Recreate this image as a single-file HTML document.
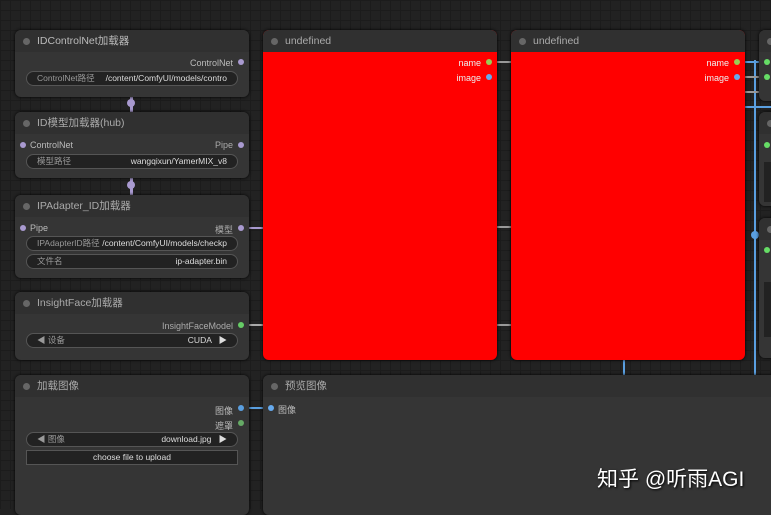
<!DOCTYPE html>
<html><head><meta charset="utf-8"><style>
*{margin:0;padding:0;box-sizing:border-box}
body{width:771px;height:509px;overflow:hidden;background:#222;position:relative;font-family:"Liberation Sans","Noto Sans CJK SC",sans-serif;font-size:9px;color:#aaa}
.grid{position:absolute;inset:0;background-image:linear-gradient(#1c1c1c 1px,transparent 1px),linear-gradient(90deg,#1c1c1c 1px,transparent 1px);background-size:10px 10px}
.n{position:absolute;background:#353535;border-radius:6px;box-shadow:0 0 3px #000}
.t{height:22px;background:#303030;border-radius:6px 6px 0 0;color:#aaa;font-size:10.5px;line-height:22px;padding-left:22px;position:relative}
.t:before{content:"";position:absolute;left:8px;top:8px;width:7px;height:7px;border-radius:50%;background:#666}
.a{position:absolute}
.dot{position:absolute;width:6px;height:6px;border-radius:50%}
.w{position:absolute;left:11px;right:11px;height:15px;border:1px solid #555;border-radius:8px;background:#222;line-height:13px;padding:0 10px;color:#999;font-size:8.5px}
.w b{position:absolute;right:10px;top:0;color:#ddd;font-weight:normal}
.r{text-align:right;right:16px}
.ln{position:absolute;background:#999}
</style></head><body><div class="grid"></div>

<div class="ln" style="left:249px;top:227px;width:14px;height:2px;background:#a99ad0"></div>
<div class="ln" style="left:249px;top:324px;width:14px;height:2px;background:#aaa"></div>
<div class="ln" style="left:497px;top:61px;width:14px;height:2px"></div>
<div class="ln" style="left:497px;top:226px;width:14px;height:2px"></div>
<div class="ln" style="left:497px;top:324px;width:14px;height:2px"></div>
<div class="ln" style="left:130px;top:97px;width:3px;height:15px;background:#a99ad0"></div>
<div class="ln" style="left:130px;top:178px;width:3px;height:17px;background:#a99ad0"></div>
<div class="dot" style="left:127px;top:99px;width:8px;height:8px;background:#a99ad0"></div>
<div class="dot" style="left:127px;top:181px;width:8px;height:8px;background:#a99ad0"></div>
<div class="ln" style="left:754px;top:60px;width:2px;height:320px;background:#5a9fe0"></div>
<div class="ln" style="left:623px;top:360px;width:2px;height:15px;background:#5a9fe0"></div>
<div class="ln" style="left:745px;top:61px;width:26px;height:2px;background:#5a9fe0"></div>
<div class="ln" style="left:745px;top:76px;width:14px;height:2px"></div>
<div class="ln" style="left:745px;top:91px;width:14px;height:2px"></div>
<div class="ln" style="left:745px;top:106px;width:26px;height:2px;background:#5a9fe0"></div>
<div class="dot" style="left:751px;top:231px;width:8px;height:8px;background:#5a9fe0"></div>
<div class="ln" style="left:249px;top:407px;width:20px;height:2px;background:#5a9fe0"></div>

<div class="n" style="left:15px;top:30px;width:234px;height:67px"><div class="t" style="color:#bbb">IDControlNet加载器</div>
<div class="a r" style="top:28px;color:#bbb">ControlNet</div><div class="dot" style="left:223px;top:29px;background:#a99ad0"></div>
<div class="w" style="top:41px">ControlNet路径<b>/content/ComfyUI/models/contro</b></div></div>

<div class="n" style="left:15px;top:112px;width:234px;height:66px"><div class="t">ID模型加载器(hub)</div>
<div class="dot" style="left:5px;top:30px;background:#a99ad0"></div><div class="a" style="left:15px;top:28px;color:#bbb">ControlNet</div>
<div class="a r" style="top:28px">Pipe</div><div class="dot" style="left:223px;top:30px;background:#a99ad0"></div>
<div class="w" style="top:42px">模型路径<b>wangqixun/YamerMIX_v8</b></div></div>

<div class="n" style="left:15px;top:195px;width:234px;height:83px"><div class="t">IPAdapter_ID加载器</div>
<div class="dot" style="left:5px;top:30px;background:#a99ad0"></div><div class="a" style="left:15px;top:28px;color:#bbb">Pipe</div>
<div class="a r" style="top:28px">模型</div><div class="dot" style="left:223px;top:30px;background:#a99ad0"></div>
<div class="w" style="top:41px">IPAdapterID路径<b>/content/ComfyUI/models/checkp</b></div>
<div class="w" style="top:59px">文件名<b>ip-adapter.bin</b></div></div>

<div class="n" style="left:15px;top:292px;width:234px;height:68px"><div class="t">InsightFace加载器</div>
<div class="a r" style="top:29px">InsightFaceModel</div><div class="dot" style="left:223px;top:30px;background:#6c6"></div>
<div class="w" style="top:41px">◀ 设备<b>CUDA &nbsp;&nbsp;▶</b></div></div>

<div class="n" style="left:15px;top:375px;width:234px;height:140px"><div class="t">加载图像</div>
<div class="a r" style="top:29px;color:#bbb">图像</div><div class="dot" style="left:223px;top:30px;background:#5a9fe0"></div>
<div class="a r" style="top:44px;color:#bbb">遮罩</div><div class="dot" style="left:223px;top:45px;background:#6a6"></div>
<div class="w" style="top:57px">◀ 图像<b>download.jpg &nbsp;&nbsp;▶</b></div>
<div class="a" style="left:11px;right:11px;top:75px;height:15px;border:1px solid #555;background:#222;text-align:center;line-height:13px;color:#ddd;font-size:8.5px">choose file to upload</div></div>

<div class="n" style="left:263px;top:30px;width:234px;height:330px;background:#f00"><div class="t">undefined</div>
<div class="a r" style="top:28px;color:#eee">name</div><div class="dot" style="left:223px;top:29px;background:#9c5"></div>
<div class="a r" style="top:43px;color:#eee">image</div><div class="dot" style="left:223px;top:44px;background:#6ae"></div></div>
<div class="n" style="left:511px;top:30px;width:234px;height:330px;background:#f00"><div class="t">undefined</div>
<div class="a r" style="top:28px;color:#eee">name</div><div class="dot" style="left:223px;top:29px;background:#9c5"></div>
<div class="a r" style="top:43px;color:#eee">image</div><div class="dot" style="left:223px;top:44px;background:#6ae"></div></div>

<div class="n" style="left:759px;top:30px;width:30px;height:71px"><div class="t"></div><div class="dot" style="left:5px;top:29px;background:#6d6"></div><div class="dot" style="left:5px;top:44px;background:#6d6"></div></div>
<div class="n" style="left:759px;top:112px;width:30px;height:94px"><div class="t"></div><div class="dot" style="left:5px;top:30px;background:#6d6"></div><div class="a" style="left:5px;top:50px;width:30px;height:40px;background:#222"></div></div>
<div class="n" style="left:759px;top:218px;width:30px;height:140px"><div class="t"></div><div class="dot" style="left:5px;top:29px;background:#6d6"></div><div class="a" style="left:5px;top:64px;width:30px;height:55px;background:#222"></div></div>

<div class="n" style="left:263px;top:375px;width:520px;height:140px"><div class="t">预览图像</div>
<div class="dot" style="left:5px;top:30px;background:#6ae"></div><div class="a" style="left:15px;top:28px;color:#bbb">图像</div></div>

<div class="a" style="left:597px;top:463px;font-size:21px;color:#fff;text-shadow:1px 1px 2px #000">知乎 @听雨AGI</div>
</body></html>
